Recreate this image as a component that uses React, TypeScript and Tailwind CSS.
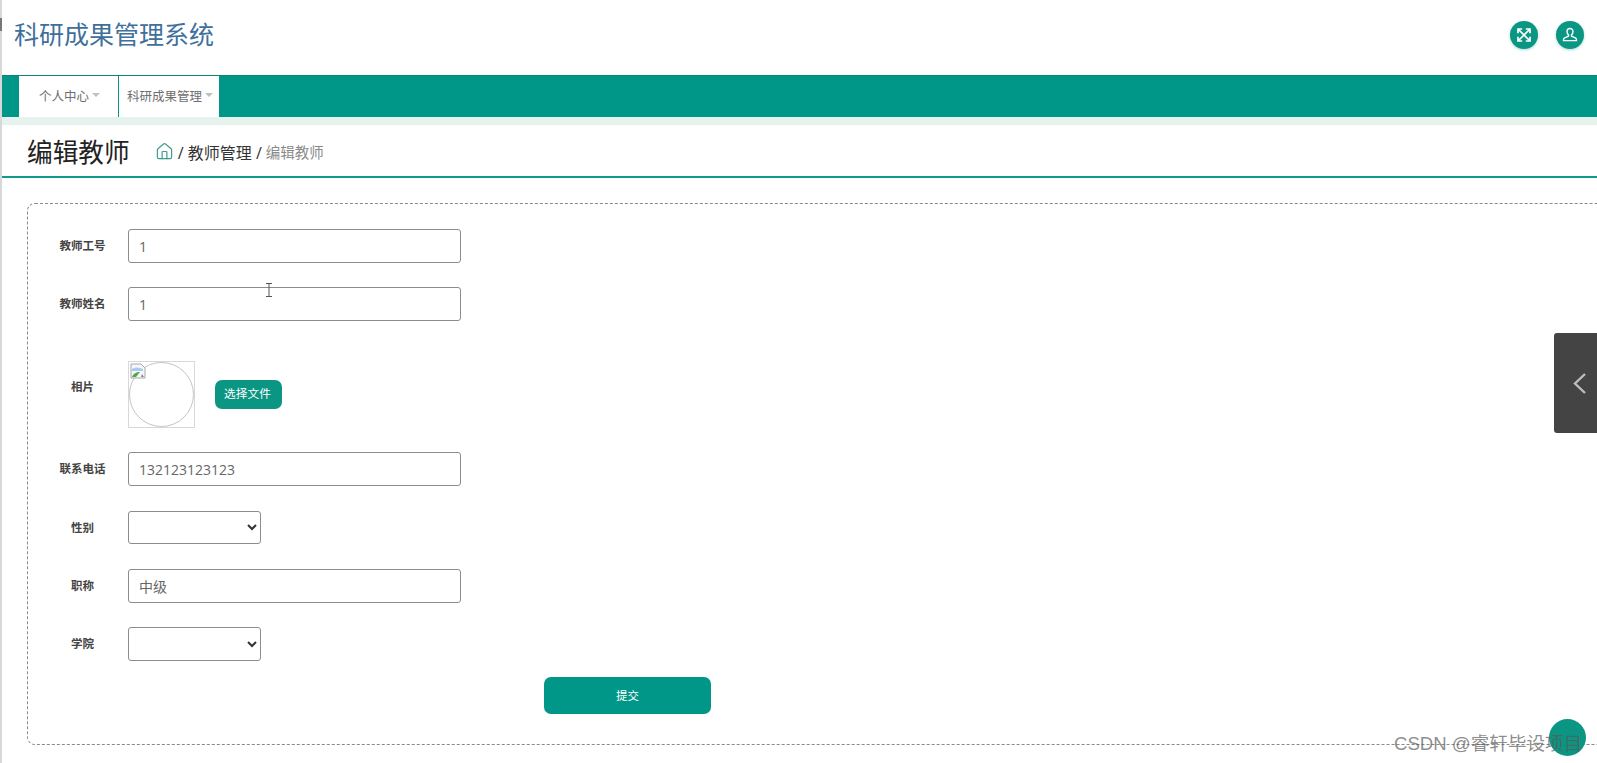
import * as React from "react";
import { House } from "lucide-react";

const FONT = "font-['Open_Sans','Noto_Sans_CJK_SC',sans-serif]";

function Caret() {
  return (
    <span className="ml-[3px] mb-[4px] inline-block h-0 w-0 border-x-[4px] border-t-[4px] border-x-transparent border-t-[#c0c0c0]" />
  );
}

function FieldLabel({ children }: { children: React.ReactNode }) {
  return (
    <label className="w-[91px] shrink-0 text-center text-[11.5px] font-bold text-[#444]">
      {children}
    </label>
  );
}

function TextRow({
  label,
  value,
  className,
}: {
  label: string;
  value: string;
  className: string;
}) {
  return (
    <div className={`flex items-center ${className}`}>
      <FieldLabel>{label}</FieldLabel>
      <input
        readOnly
        defaultValue={value}
        className="h-[34px] w-[333px] rounded-[3px] border border-[#8c8c8c] bg-white px-[10px] text-[14px] text-[#666] outline-none"
      />
    </div>
  );
}

function SelectRow({
  label,
  className,
  selectClassName,
}: {
  label: string;
  className: string;
  selectClassName: string;
}) {
  return (
    <div className={`flex items-center ${className}`}>
      <FieldLabel>{label}</FieldLabel>
      <select
        className={`w-[133px] rounded-[3px] border border-[#8c8c8c] bg-white text-[13.5px] text-[#333] outline-none ${selectClassName}`}
      >
        <option value=""></option>
      </select>
    </div>
  );
}

export default function App() {
  return (
    <div className={`relative flex h-[763px] overflow-hidden bg-white ${FONT}`}>
      <div className="relative w-[2px] shrink-0 bg-[#d8d8d8]">
        <div className="absolute left-0 top-[18px] h-[13px] w-[2px] bg-[#777]" />
      </div>

      <div className="min-w-0 flex-1">
        <header className="flex h-[75px] items-center justify-between pb-[5px] pl-[12px] pr-[13px]">
          <h1 className="text-[25px] font-normal text-[#3f6f9b]">科研成果管理系统</h1>
          <div className="flex items-center gap-[18px]">
            <button
              type="button"
              className="flex h-[28px] w-[28px] items-center justify-center rounded-full bg-[#0b9583] text-white shadow-[0_1px_3px_rgba(0,150,136,0.35)]"
            >
              <svg viewBox="0 0 16 16" className="h-[16px] w-[16px]" fill="none" stroke="currentColor" strokeWidth="1.7" aria-hidden="true">
                <path d="M2.5 2.5l11 11M13.5 2.5l-11 11" />
                <path d="M2 6.2V2h4.2M9.8 2H14v4.2M14 9.8V14H9.8M6.2 14H2V9.8" />
              </svg>
            </button>
            <button
              type="button"
              className="flex h-[28px] w-[28px] items-center justify-center rounded-full bg-[#0b9583] text-white shadow-[0_1px_3px_rgba(0,150,136,0.35)]"
            >
              <svg viewBox="0 0 16 16" className="h-[16px] w-[16px]" fill="none" stroke="currentColor" strokeWidth="1.4" aria-hidden="true">
                <path d="M8 1.5c-1.9 0-3 1.3-3 3.1 0 1.5.6 2.6 1.5 3.3v1.2L2.3 11.2c-.7.4-.8 1.1-.8 1.8v.6h13V13c0-.7-.1-1.4-.8-1.8L9.5 9.1V7.9c.9-.7 1.5-1.8 1.5-3.3 0-1.8-1.1-3.1-3-3.1z" />
              </svg>
            </button>
          </div>
        </header>

        <nav className="flex h-[42px] border-t border-[#0f8475] bg-[#009688] pl-[17px]">
          <a className="flex w-[99px] items-center justify-center bg-white pl-[2px] pt-[1px] text-[12.5px] text-[#6e6e6e]">
            个人中心
            <Caret />
          </a>
          <a className="ml-px flex w-[100px] items-center justify-center bg-white pl-[2px] pt-[1px] text-[12.5px] text-[#6e6e6e]">
            科研成果管理
            <Caret />
          </a>
        </nav>
        <div className="h-[8px] bg-[#e6f2ee]" />

        <div className="flex h-[53px] items-center border-b-2 border-[#109a8b] pt-[6px] pl-[25px]">
          <h2 className="text-[25.7px] font-normal text-[#222]">编辑教师</h2>
          <div className="mb-[2px] ml-[25px] flex items-center gap-[4px] text-[16px] text-[#333]">
            <House className="mb-[3px] h-[19px] w-[19px] text-[#3f9c8c]" strokeWidth={1.5} aria-hidden="true" />
            <span>/ 教师管理 /</span>
            <span className="text-[14.5px] text-[#8a8a8a]">编辑教师</span>
          </div>
        </div>

        <form className="ml-[25px] mt-[25px] h-[542px] w-[1600px] rounded-[8px] border border-dashed border-[#8a8a8a] pl-[9px] pt-[25px]">
          <TextRow label="教师工号" value="1" className="" />
          <TextRow label="教师姓名" value="1" className="mt-[24px]" />

          <div className="mt-[40px] flex items-center">
            <FieldLabel>
              <span className="relative bottom-[8px]">相片</span>
            </FieldLabel>
            <div className="relative h-[67px] w-[67px] shrink-0 border border-[#d8d8d8]">
              <div className="h-full w-full rounded-full border border-[#c4c4c4]" />
              <svg viewBox="0 0 16 16" className="absolute left-[1px] top-[1px] h-[16px] w-[16px]" aria-hidden="true">
                <path d="M1 1h10l4 4v10H1z" fill="#f4f7fb" stroke="#a8a8a8" />
                <path d="M2 6c3-2 7-2 11 0v2H2z" fill="#a9c9ee" />
                <path d="M2 14c1-3 4-5 8-5l-4 5z" fill="#56a548" />
                <path d="M12 11l2 3h-3z" fill="#8a8a8a" />
              </svg>
            </div>
            <button
              type="button"
              className="ml-[20px] h-[29px] w-[67px] rounded-[7px] bg-[#0b9583] pb-[1px] pr-[2px] text-[11.7px] text-white"
            >
              选择文件
            </button>
          </div>

          <TextRow label="联系电话" value="132123123123" className="mt-[24px]" />
          <SelectRow label="性别" className="mt-[25px]" selectClassName="h-[33px]" />
          <TextRow label="职称" value="中级" className="mt-[25px]" />
          <SelectRow label="学院" className="mt-[24px]" selectClassName="h-[34px]" />

          <div className="mt-[16px] pl-[507px]">
            <button
              type="button"
              className="h-[37px] w-[167px] rounded-[7px] bg-[#009688] text-[11.5px] text-white"
            >
              提交
            </button>
          </div>
        </form>
      </div>

      {/* mouse cursor caught in the screenshot */}
      <svg viewBox="0 0 8 14" className="absolute left-[265px] top-[283px] h-[14px] w-[8px]" fill="none" stroke="#555" aria-hidden="true">
        <path d="M1 .5h6M4 .5v13M1 13.5h6" />
      </svg>

      <div className="absolute right-0 top-[333px] flex h-[100px] w-[43px] items-center justify-center rounded-l-[3px] bg-[#444]">
        <svg viewBox="0 0 13 21" className="ml-[7px] h-[21px] w-[13px]" fill="none" stroke="#bdbdbd" strokeWidth="2.4" aria-hidden="true">
          <path d="M12 1L2 10.5 12 20" />
        </svg>
      </div>
      <div className="absolute left-[1549px] top-[719px] h-[37px] w-[37px] rounded-full bg-[#0b9583]" />
      <span className="absolute left-[1394px] top-[732px] whitespace-nowrap font-['Liberation_Sans','Noto_Sans_CJK_SC',sans-serif] text-[18.6px] leading-[24px] text-[rgba(90,90,90,0.7)]">
        CSDN @睿轩毕设项目
      </span>
    </div>
  );
}
